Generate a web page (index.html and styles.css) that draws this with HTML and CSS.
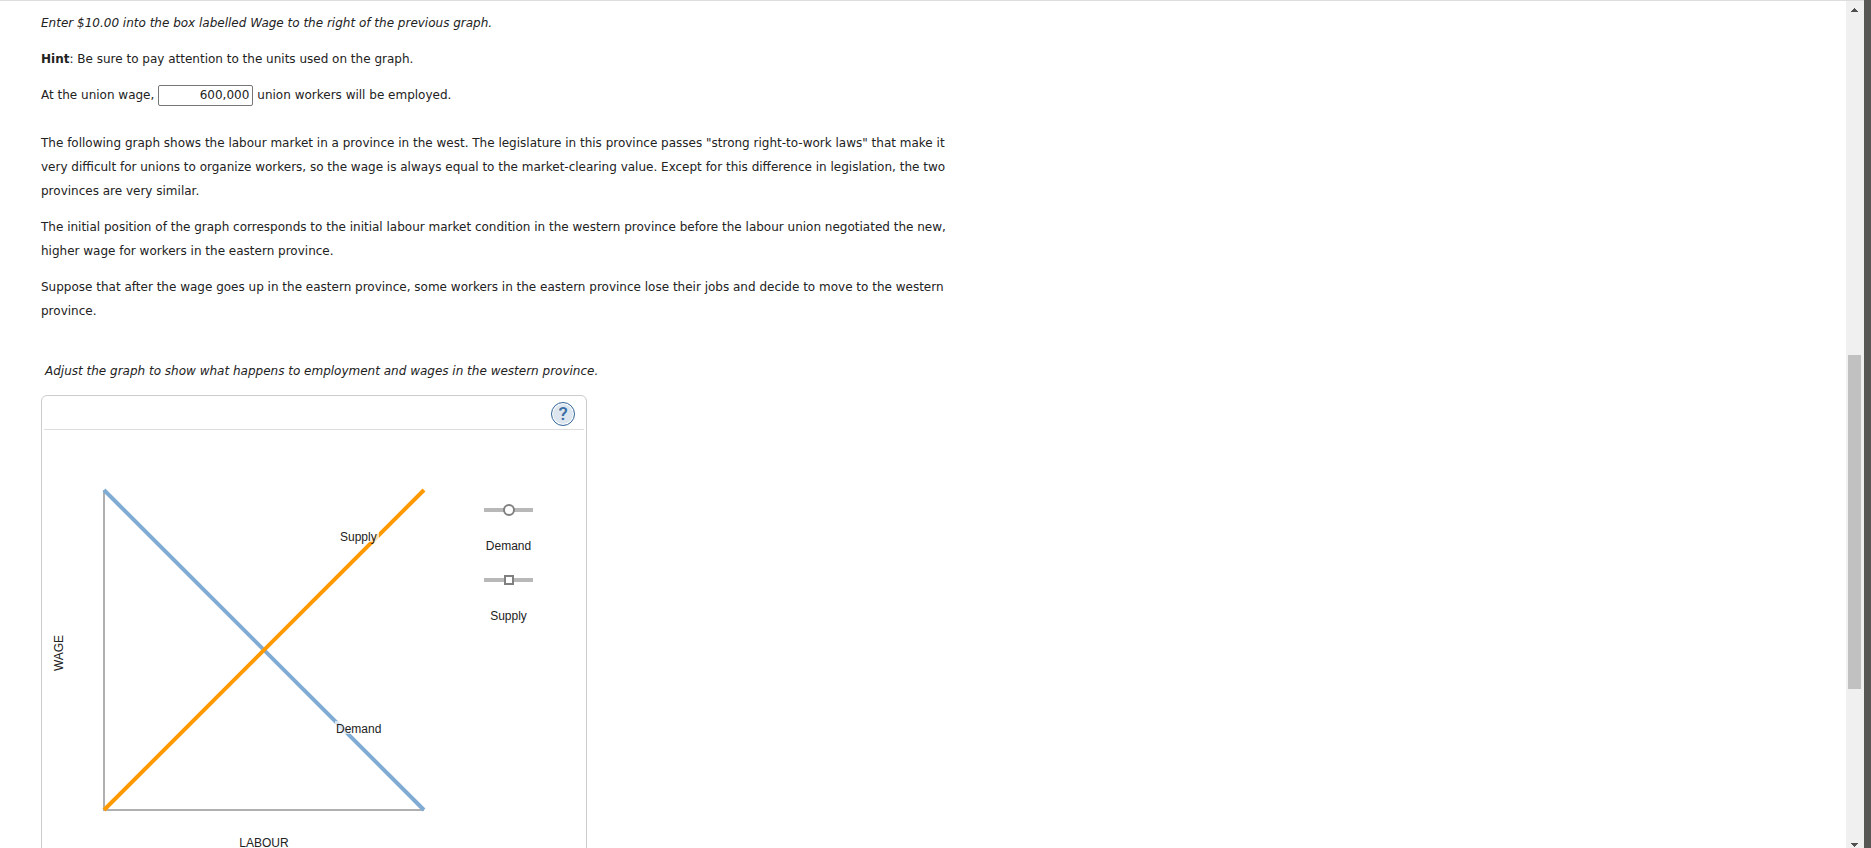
FILE: index.html
```html
<!DOCTYPE html>
<html lang="en">
<head>
<meta charset="utf-8">
<title>Labour market</title>
<link rel="stylesheet" href="styles.css">
</head>
<body>
<div class="window">
  <main class="page">
    <div class="content">
      <p class="instruction">Enter $10.00 into the box labelled Wage to the right of the previous graph.</p>
      <p><b class="hint">Hint</b>: Be sure to pay attention to the units used on the graph.</p>
      <p class="answer"><label for="workers">At the union wage,</label><input class="answer-box" id="workers" type="text" value="600,000"><span>union workers will be employed.</span></p>
      <section class="question">
        <p>The following graph shows the labour market in a province in the west. The legislature in this province passes "strong right-to-work laws" that make it very difficult for unions to organize workers, so the wage is always equal to the market-clearing value. Except for this difference in legislation, the two provinces are very similar.</p>
        <p>The initial position of the graph corresponds to the initial labour market condition in the western province before the labour union negotiated the new, higher wage for workers in the eastern province.</p>
        <p>Suppose that after the wage goes up in the eastern province, some workers in the eastern province lose their jobs and decide to move to the western province.</p>
      </section>
      <p class="instruction adjust">Adjust the graph to show what happens to employment and wages in the western province.</p>
      <section class="panel">
        <header class="panel-head"><button class="help" type="button" aria-label="Help">?</button></header>
        <div class="panel-body">
          <svg class="chart" viewBox="0 0 400 400" role="img" aria-label="Supply and demand for labour">
            <path class="axis" d="M56 40V360H376"/>
            <path class="demand" d="M56 40L376 360"/>
            <path class="supply" d="M56 360L376 40"/>
            <rect class="label-bg" x="291" y="78" width="40" height="14"/>
            <text class="label" x="292" y="91">Supply</text>
            <rect class="label-bg" x="287" y="271" width="46" height="13"/>
            <text class="label" x="288" y="283">Demand</text>
            <text class="label" x="216" y="397" text-anchor="middle">LABOUR</text>
            <text class="label" x="15" y="203" text-anchor="middle" transform="rotate(-90 15 203)">WAGE</text>
          </svg>
          <div class="controls">
            <div class="control"><input class="slider round" id="demand" type="range"><label for="demand">Demand</label></div>
            <div class="control"><input class="slider" id="supply" type="range"><label for="supply">Supply</label></div>
          </div>
        </div>
      </section>
    </div>
  </main>
  <div class="scrollbar">
    <button class="arrow" type="button" aria-label="Scroll up"><svg width="7" height="4" viewBox="0 0 7 4"><path d="M3 0H4V1H5V2H6V3H7V4H0V3H1V2H2V1H3Z"/></svg></button>
    <div class="track"><div class="thumb"></div></div>
    <button class="arrow down" type="button" aria-label="Scroll down"><svg width="7" height="4" viewBox="0 0 7 4"><path d="M0 0H7V1H6V2H5V3H4V4H3V3H2V2H1V1H0Z"/></svg></button>
  </div>
  <div class="edge"></div>
</div>
</body>
</html>
```
FILE: styles.css
```css
* { box-sizing: border-box; }
body {
  margin: 0;
  background: #fff;
  color: #222;
  font: 12px/24px Verdana, "DejaVu Sans", sans-serif;
}
.window { display: flex; height: 100vh; overflow: hidden; }
.page {
  flex: 1;
  min-width: 0;
  overflow: hidden;
  border-top: 1px solid #ddd;
  padding: 10px 40px 0 41px;
}
.content { max-width: 920px; }
p { margin: 0 0 12px; }
.instruction { font-style: italic; }
.answer { display: flex; align-items: center; gap: 4px; }
.answer-box {
  width: 95px;
  height: 21px;
  padding: 0 3px;
  border: 1px solid #767676;
  border-radius: 2px;
  color: inherit;
  font: inherit;
  text-align: right;
}
.question { margin: 24px 0 36px; }
.adjust { padding-left: 4px; }
.panel {
  max-width: 546px;
  border: 1px solid #ccc;
  border-radius: 6px;
  font: 12px/16px "Liberation Sans", Arial, sans-serif;
}
.panel-head {
  display: flex;
  align-items: center;
  justify-content: flex-end;
  height: 34px;
  margin: 0 2px;
  padding: 2px 9px 0;
  border-bottom: 1px solid #ddd;
}
.help {
  width: 24px;
  height: 24px;
  padding: 0;
  border: 1px solid #336699;
  border-radius: 50%;
  background: #dde6ee;
  box-shadow: inset 0 0 0 1px #fff;
  color: #3a6ea5;
  font: 500 19px/20px Roboto, Arial, sans-serif;
}
.panel-body { display: flex; padding: 20px 6px 24px; }
.chart { width: 400px; height: 400px; }
.axis { fill: none; stroke: #b0b0b0; stroke-width: 2; }
.demand { stroke: #80acd4; stroke-width: 4; }
.supply { stroke: #ff9900; stroke-width: 4; }
.label-bg { fill: #fff; fill-opacity: 0.7; }
.label { fill: #222; }
.controls { display: flex; flex-direction: column; gap: 16px; padding: 50px 0 0 36px; }
.control { display: flex; flex-direction: column; align-items: center; gap: 18px; }
.slider {
  appearance: none;
  width: 49px;
  height: 20px;
  margin: 0;
  background: linear-gradient(#b8b8b8, #b8b8b8) center / 100% 4px no-repeat;
}
.slider::-webkit-slider-thumb {
  appearance: none;
  width: 10px;
  height: 10px;
  border: 2px solid #808080;
  background: #fff;
}
.slider.round::-webkit-slider-thumb { width: 12px; height: 12px; border-radius: 50%; }
.scrollbar {
  display: flex;
  flex-direction: column;
  width: 18px;
  padding: 0 3px 0 2px;
  border-top: 1px solid #ddd;
  background: #f0f0f0;
}
.arrow {
  display: flex;
  align-items: center;
  justify-content: center;
  height: 17px;
  padding: 0;
  border: 0;
  background: none;
  fill: #505050;
}
.arrow.down { height: 6px; }
.track { display: flex; flex: 1; flex-direction: column; }
.track::before { content: ""; flex: 337; }
.thumb { flex: 334; background: #c1c1c1; }
.track::after { content: ""; flex: 153; }
.edge { width: 7px; background: #575755; }
```
